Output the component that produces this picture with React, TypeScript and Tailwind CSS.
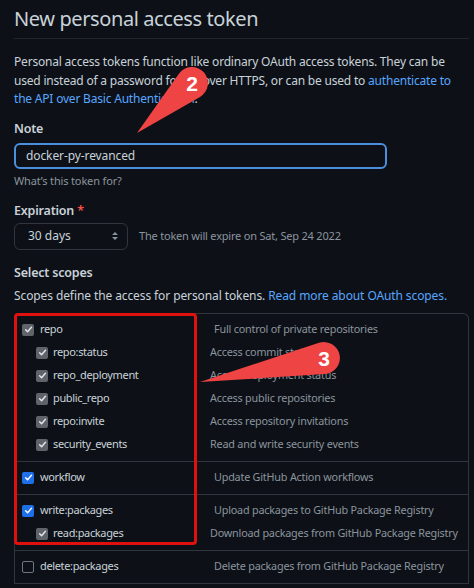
import React from 'react'

type Scope = { name: string; desc: string; sub?: boolean; state: 'gray' | 'blue' | 'off' }

const groups: Scope[][] = [
  [
    { name: 'repo', desc: 'Full control of private repositories', state: 'gray' },
    { name: 'repo:status', desc: 'Access commit status', sub: true, state: 'gray' },
    { name: 'repo_deployment', desc: 'Access deployment status', sub: true, state: 'gray' },
    { name: 'public_repo', desc: 'Access public repositories', sub: true, state: 'gray' },
    { name: 'repo:invite', desc: 'Access repository invitations', sub: true, state: 'gray' },
    { name: 'security_events', desc: 'Read and write security events', sub: true, state: 'gray' },
  ],
  [{ name: 'workflow', desc: 'Update GitHub Action workflows', state: 'blue' }],
  [
    { name: 'write:packages', desc: 'Upload packages to GitHub Package Registry', state: 'blue' },
    { name: 'read:packages', desc: 'Download packages from GitHub Package Registry', sub: true, state: 'gray' },
  ],
  [{ name: 'delete:packages', desc: 'Delete packages from GitHub Package Registry', state: 'off' }],
]

function Check({ state }: { state: Scope['state'] }) {
  if (state === 'off') {
    return <span className="w-[12px] h-[12px] rounded-[2px] border border-[#6e7681] bg-[#0d1117] shrink-0" />
  }
  return (
    <span
      className={
        state === 'blue'
          ? 'w-[12px] h-[12px] rounded-[2px] bg-[#1f6feb] flex items-center justify-center shrink-0'
          : 'w-[12px] h-[12px] rounded-[2px] bg-[#5f646b] flex items-center justify-center shrink-0'
      }
    >
      <svg width="9" height="9" viewBox="0 0 10 10" fill="none">
        <path d="M1.8 5.2 L4 7.4 L8.3 2.6" stroke={state === 'blue' ? '#ffffff' : '#e6e6e6'} strokeWidth="1.6" strokeLinecap="round" strokeLinejoin="round" />
      </svg>
    </span>
  )
}

export default function App() {
  return (
    <div className="relative w-[474px] h-[588px] overflow-hidden bg-[#0d1117] pl-[14px] pr-[5px] text-[#c9d1d9]" style={{ fontFamily: '"Noto Sans", "Open Sans", sans-serif' }}>
      <div className="pt-[4px] pb-[4px] border-b border-[#21262d]">
        <h1 className="text-[20px] leading-[30px] font-normal tracking-[-0.4px] text-[#c9d1d9]">New personal access token</h1>
      </div>

      <p className="mt-[14px] text-[12px] leading-[18.5px] tracking-[-0.2px] text-[#c9d1d9]">
        Personal access tokens function like ordinary OAuth access tokens. They can be used instead of a password for Git over HTTPS, or can be used to{' '}
        <span className="text-[#58a6ff]">authenticate to the API over Basic Authentication</span>.
      </p>

      <div className="mt-[10px] text-[12.5px] leading-[20px] font-semibold tracking-[-0.2px]">Note</div>
      <div className="mt-[4px] w-[373px] h-[26px] rounded-[6px] border-2 border-[#4b8fde] flex items-center pl-[10px] text-[12px] tracking-[-0.1px]">
        docker-py-revanced
      </div>
      <div className="mt-[4px] text-[11px] leading-[16px] tracking-[-0.15px] text-[#8b949e]">What’s this token for?</div>

      <div className="mt-[12px] text-[12.5px] leading-[20px] font-semibold tracking-[-0.2px]">
        Expiration <span className="text-[#f85149]">*</span>
      </div>
      <div className="mt-[2px] flex items-center gap-[11px]">
        <div className="w-[114px] h-[27px] rounded-[6px] border border-[#30363d] bg-[#0d1117] flex items-center justify-between pl-[13px] pr-[8px] text-[12px]">
          <span>30 days</span>
          <svg width="8" height="10" viewBox="0 0 8 10">
            <path d="M4 1 L7 4 H1 Z M4 9 L1 6 H7 Z" fill="#8b949e" />
          </svg>
        </div>
        <span className="text-[11px] tracking-[-0.2px] text-[#8b949e]">The token will expire on Sat, Sep 24 2022</span>
      </div>

      <div className="mt-[13px] text-[12.5px] leading-[20px] font-semibold tracking-[-0.2px]">Select scopes</div>
      <p className="mt-[4px] text-[12px] leading-[18px] tracking-[-0.1px]">
        Scopes define the access for personal tokens. <span className="text-[#58a6ff]">Read more about OAuth scopes.</span>
      </p>

      <div className="relative mt-[8px] w-[455px] rounded-t-[6px] border border-b-0 border-[#30363d]">
        {groups.map((g, i) => (
          <div key={i} className="py-[4.5px] border-b border-[#30363d]">
            {g.map((s) => (
              <div key={s.name} className="h-[23px] flex items-center whitespace-nowrap">
                <div className={s.sub ? 'w-[195px] flex items-center gap-[5px] pl-[21px]' : 'w-[195px] flex items-center gap-[6px] pl-[7px]'}>
                  <Check state={s.state} />
                  <span className="text-[11px] tracking-[-0.35px] text-[#c9d1d9]">{s.name}</span>
                </div>
                <span className={s.sub ? 'text-[10.8px] tracking-[-0.2px] text-[#8b949e]' : 'pl-[4px] text-[10.8px] tracking-[-0.2px] text-[#8b949e]'}>{s.desc}</span>
              </div>
            ))}
          </div>
        ))}
        <div className="absolute -left-px -top-px w-[183px] h-[232px] rounded-[4px] border-[3px] border-[#e0100f]" />
      </div>

      <svg className="absolute left-0 top-0 pointer-events-none" width="474" height="588" viewBox="0 0 474 588">
        <path d="M137 133 L178.9 73.8 A16 16 0 1 1 200 96.9 Z" fill="#ee4444" />
        <text x="192" y="90.5" textAnchor="middle" fontSize="21" fontWeight="700" fill="#ffffff" fontFamily="Liberation Sans, sans-serif">2</text>
        <path d="M200 382 L319 342.8 A16 16 0 1 1 325 374 Z" fill="#ee4444" />
        <text x="324" y="365.5" textAnchor="middle" fontSize="21" fontWeight="700" fill="#ffffff" fontFamily="Liberation Sans, sans-serif">3</text>
      </svg>
    </div>
  )
}
